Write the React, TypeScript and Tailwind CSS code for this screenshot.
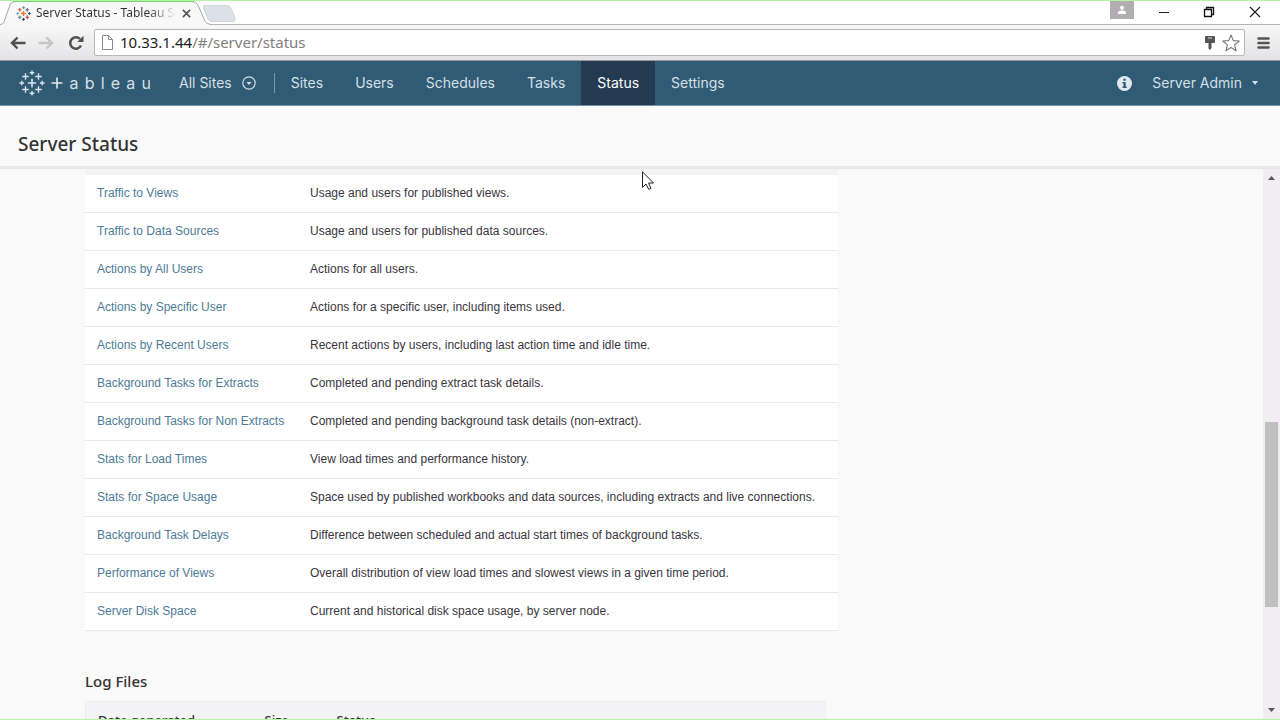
const navItems = ["Sites", "Users", "Schedules", "Tasks", "Status", "Settings"]

const views = [
  { name: "Traffic to Views", description: "Usage and users for published views." },
  { name: "Traffic to Data Sources", description: "Usage and users for published data sources." },
  { name: "Actions by All Users", description: "Actions for all users." },
  { name: "Actions by Specific User", description: "Actions for a specific user, including items used." },
  { name: "Actions by Recent Users", description: "Recent actions by users, including last action time and idle time." },
  { name: "Background Tasks for Extracts", description: "Completed and pending extract task details." },
  { name: "Background Tasks for Non Extracts", description: "Completed and pending background task details (non-extract)." },
  { name: "Stats for Load Times", description: "View load times and performance history." },
  { name: "Stats for Space Usage", description: "Space used by published workbooks and data sources, including extracts and live connections." },
  { name: "Background Task Delays", description: "Difference between scheduled and actual start times of background tasks." },
  { name: "Performance of Views", description: "Overall distribution of view load times and slowest views in a given time period." },
  { name: "Server Disk Space", description: "Current and historical disk space usage, by server node." },
]

function TableauMark({ className, colored = false }: { className?: string; colored?: boolean }) {
  const c = (color: string) => (colored ? color : "#dbe5ee")
  return (
    <svg viewBox="0 0 28 28" className={className} fill="none" strokeWidth={colored ? 2.2 : 1.5} aria-hidden="true">
      <path d="M14 9.5v9M9.5 14h9" stroke={c("#e8762c")} strokeWidth={colored ? 2.6 : 1.8} />
      <path d="M7 3.5v7M3.5 7h7" stroke={c("#c7603a")} />
      <path d="M21 3.5v7M17.5 7h7" stroke={c("#5c6692")} />
      <path d="M7 17.5v7M3.5 21h7" stroke={c("#59879b")} />
      <path d="M21 17.5v7M17.5 21h7" stroke={c("#c7403f")} />
      <path d="M14 .5v5M11.5 3h5" stroke={c("#7099a6")} />
      <path d="M14 22.5v5M11.5 25h5" stroke={c("#1f457e")} />
      <path d="M3 11.5v5M.5 14h5" stroke={c("#7199a6")} />
      <path d="M25 11.5v5M22.5 14h5" stroke={c("#1f457e")} />
    </svg>
  )
}

function TabStrip() {
  return (
    <div className="relative flex h-[25px] items-end border-t border-[#b5f5a5] bg-white font-['Noto_Sans',sans-serif]">
      <div className="relative z-10 h-full w-[208px]">
        <svg className="absolute top-0 left-0 h-6 w-[212px]" viewBox="0 0 212 24" fill="none" aria-hidden="true">
          <path d="M0 23.5C4 23 4 21 5 18L10 4Q11 .5 15 .5H192Q196 .5 198 4L204 18Q206 23.5 212 23.5V24H0Z" fill="#f8f8f8" />
          <path d="M0 23.5C4 23 4 21 5 18L10 4Q11 .5 15 .5H192Q196 .5 198 4L204 18Q206 23.5 212 23.5" stroke="#a5a5a5" />
          <path d="M13 .5H194" stroke="#7bd46c" />
        </svg>
        <div className="relative flex h-full items-center pr-4 pl-4">
          <TableauMark colored className="h-[15px] w-[15px] shrink-0" />
          <span className="ml-[5px] w-[140px] overflow-hidden bg-gradient-to-r from-[#333] from-80% to-transparent bg-clip-text text-xs whitespace-nowrap text-transparent">
            Server Status - Tableau Se
          </span>
          <button aria-label="Close tab" className="ml-[6px] shrink-0">
            <svg className="h-[9px] w-[9px]" viewBox="0 0 10 10" stroke="#555" strokeWidth="1.8" aria-hidden="true">
              <path d="M1 1l8 8M9 1l-8 8" />
            </svg>
          </button>
        </div>
      </div>
      <div className="h-px flex-1 bg-[#b5b5b5]" />
      <button aria-label="New tab" className="absolute top-1 left-[202px] z-10">
        <svg className="h-[17px] w-[34px]" viewBox="0 0 34 17" aria-hidden="true">
          <path d="M3 .5H25Q28 .5 29 3L33 13Q34 16.5 30 16.5H10Q7 16.5 6 14L1.5 3Q1 .5 3 .5Z" fill="#dce0e8" stroke="#d2d5da" />
        </svg>
      </button>
      <div className="absolute top-0 right-0 flex h-[22px] items-center">
        <button aria-label="Profile" className="flex h-[18px] w-6 items-center justify-center self-start bg-[#b0aeb0]">
          <svg className="h-[10px] w-[10px]" viewBox="0 0 10 10" fill="#fff" aria-hidden="true">
            <circle cx="5" cy="2.7" r="2" />
            <path d="M1 9V7.5Q1 5.5 5 5.5T9 7.5V9Z" />
          </svg>
        </button>
        <button aria-label="Minimize" className="ml-6">
          <svg className="h-3 w-3" viewBox="0 0 12 12" stroke="#222" aria-hidden="true">
            <path d="M1 6.5h10" />
          </svg>
        </button>
        <button aria-label="Restore" className="ml-[33px]">
          <svg className="h-3 w-3" viewBox="0 0 12 12" fill="none" stroke="#111" strokeWidth="1.3" aria-hidden="true">
            <path d="M1.5 3.5h7v7h-7zM3.5 3.5v-2h7v7h-2" />
          </svg>
        </button>
        <button aria-label="Close window" className="mr-[19px] ml-[34px]">
          <svg className="h-3 w-3" viewBox="0 0 12 12" stroke="#222" strokeWidth="1.2" aria-hidden="true">
            <path d="M1 1l10 10M11 1L1 11" />
          </svg>
        </button>
      </div>
    </div>
  )
}

function Toolbar() {
  return (
    <div className="flex h-9 items-center border-b border-[#9a9a9e] bg-gradient-to-b from-[#f8f8f8] to-[#e4e2e5] px-[10px]">
      <button aria-label="Back" className="flex">
        <svg className="h-[14px] w-4" viewBox="0 0 16 14" fill="none" stroke="#505050" strokeWidth="2.4" aria-hidden="true">
          <path d="M7.5 1.5L2 7l5.5 5.5M2 7h13.5" />
        </svg>
      </button>
      <button aria-label="Forward" className="ml-3 flex">
        <svg className="h-[14px] w-4" viewBox="0 0 16 14" fill="none" stroke="#c6c6c6" strokeWidth="2.4" aria-hidden="true">
          <path d="M8.5 1.5L14 7l-5.5 5.5M14 7H.5" />
        </svg>
      </button>
      <button aria-label="Reload" className="ml-[14px] flex">
        <svg className="h-4 w-4" viewBox="0 0 16 16" aria-hidden="true">
          <path d="M13 10.5A5.7 5.7 0 1 1 12 4" fill="none" stroke="#505050" strokeWidth="2.5" />
          <path d="M15.5 .8V7H9.3Z" fill="#505050" />
        </svg>
      </button>
      <div className="ml-[10px] flex h-[27px] flex-1 items-center rounded-[2px] border border-[#b8b8b8] bg-white pr-1 pl-[6px]">
        <svg className="h-[15px] w-[13px] shrink-0" viewBox="0 0 13 15" fill="#fff" stroke="#8a8a8a" aria-hidden="true">
          <path d="M1.5 .5h6l4 4v10h-10zM7.5 .5v4h4" />
        </svg>
        <div className="ml-[6px] flex-1 pb-px font-['Noto_Sans',sans-serif] text-[15px] leading-6 text-[#808080]">
          <span className="text-[#1c1c1c]">10.33.1.44</span>/#/server/status
        </div>
        <svg className="h-[14px] w-[10px]" viewBox="0 0 10 14" fill="#555" aria-hidden="true">
          <path d="M1 0h8q1 0 1 1v5q0 1-1 1H6.5v5L5 14l-1.5-1.5V7H1Q0 7 0 6V1Q0 0 1 0Z" />
          <path d="M3 2h4" stroke="#ddd" />
        </svg>
        <button aria-label="Bookmark" className="ml-[7px]">
          <svg className="h-[18px] w-[18px]" viewBox="0 0 18 18" fill="#fff" stroke="#777" strokeWidth="1.1" strokeLinejoin="round" aria-hidden="true">
            <path d="M9 1l2.3 5.6 5.9.4-4.600 3.8 1.500 5.900L9 13.500l-5.100 3.200 1.500-5.900L.8 7l5.900-.4Z" />
          </svg>
        </button>
      </div>
      <button aria-label="Menu" className="ml-3">
        <svg className="h-3 w-[13px]" viewBox="0 0 13 12" stroke="#555" strokeWidth="2.6" strokeLinecap="round" aria-hidden="true">
          <path d="M1.5 1.5h10M1.5 6h10M1.5 10.5h10" />
        </svg>
      </button>
    </div>
  )
}

function NavBar() {
  return (
    <header className="flex h-[45px] items-center border-b border-[#7592a6] bg-[#315a75] font-[Inter,sans-serif] text-sm text-[#d5e0e8]">
      <a href="#" aria-label="tableau" className="ml-[19px] flex w-[132px] items-center justify-between">
        <TableauMark className="h-[26px] w-[26px]" />
        <svg className="h-3 w-3" viewBox="0 0 12 12" stroke="#e3eaf0" strokeWidth="1.6" aria-hidden="true">
          <path d="M6 .5v11M.5 6h11" />
        </svg>
        {["a", "b", "l", "e", "a", "u"].map((letter, i) => (
          <span key={i} className="text-base">
            {letter}
          </span>
        ))}
      </a>
      <button className="ml-7 flex items-center gap-[10px]">
        All Sites
        <svg className="h-[14px] w-[14px]" viewBox="0 0 14 14" fill="none" stroke="#d5e0e8" strokeWidth="1.2" aria-hidden="true">
          <circle cx="7" cy="7" r="6.2" />
          <path d="M4.5 6h5L7 9Z" fill="#d5e0e8" stroke="none" />
        </svg>
      </button>
      <div className="ml-[18px] h-5 w-px bg-[#7d98aa]" />
      <nav className="flex h-full">
        {navItems.map((item) => (
          <a
            key={item}
            href="#"
            className={`flex items-center px-4 ${item === "Status" ? "bg-[#233a50] text-white" : ""}`}
          >
            {item}
          </a>
        ))}
      </nav>
      <div className="mr-[22px] ml-auto flex items-center">
        <button aria-label="Information">
          <svg className="h-[15px] w-[15px]" viewBox="0 0 15 15" aria-hidden="true">
            <circle cx="7.5" cy="7.5" r="7.5" fill="#e0e8f0" />
            <path d="M6.3 2.8h2.4v2H6.3zM5.5 6h3.2v4.5h1V12H5.5v-1.5h1v-3h-1z" fill="#315a75" />
          </svg>
        </button>
        <button className="ml-5 flex items-center gap-[10px]">
          Server Admin
          <svg className="h-1 w-[6px]" viewBox="0 0 6 4" fill="#d5e0e8" aria-hidden="true">
            <path d="M0 0h6L3 4Z" />
          </svg>
        </button>
      </div>
    </header>
  )
}

function Scrollbar() {
  return (
    <div className="flex w-[17px] shrink-0 flex-col items-center bg-[#f0eef1] py-[7px]" aria-hidden="true">
      <svg className="h-1 w-[7px]" viewBox="0 0 7 4" fill="#555">
        <path d="M3.5 0L7 4H0Z" />
      </svg>
      <div className="flex w-[13px] flex-1 flex-col py-1">
        <div className="flex-[238]" />
        <div className="flex-[186] bg-[#c1c0c1]" />
        <div className="flex-[97]" />
      </div>
      <svg className="h-1 w-[7px]" viewBox="0 0 7 4" fill="#555">
        <path d="M0 0h7L3.5 4Z" />
      </svg>
    </div>
  )
}

export default function App() {
  return (
    <div className="relative flex h-screen flex-col overflow-hidden border-b border-[#b5f5a5] bg-[#f9f9f9]">
      <TabStrip />
      <Toolbar />
      <NavBar />
      <div className="border-b-[3px] border-[#e8e7e8] px-[18px] pt-6 pb-2">
        <h1 className="font-['Noto_Sans',sans-serif] text-[19px] leading-7 font-medium text-[#333]">Server Status</h1>
      </div>
      <div className="flex min-h-0 flex-1">
        <main className="min-w-0 flex-1 overflow-hidden pl-[85px] font-['Liberation_Sans',Arial,sans-serif]">
          <div className="w-[753px] border-t-[6px] border-[#f3f3f4] bg-white">
            <table className="w-full border-separate border-spacing-0 text-xs text-[#3a3540]">
              <tbody>
                {views.map((view) => (
                  <tr key={view.name} className="h-[38px]">
                    <td className="w-[213px] border-b border-[#e9e8eb] px-3 pb-[2px]">
                      <a href="#" className="text-[#4d7b98]">
                        {view.name}
                      </a>
                    </td>
                    <td className="border-b border-[#e9e8eb] px-3 pb-[2px]">{view.description}</td>
                  </tr>
                ))}
              </tbody>
            </table>
          </div>
          <h2 className="mt-[38px] font-['Noto_Sans',sans-serif] text-[15px] leading-6 font-medium text-[#333]">Log Files</h2>
          <table className="mt-2 w-[741px] border border-[#ececee] bg-[#f4f4f6] text-left font-['Noto_Sans',sans-serif] text-[13px] text-[#333]">
            <thead>
              <tr className="h-[38px]">
                <th className="w-[167px] px-3 font-medium">Date generated</th>
                <th className="w-[72px] px-3 font-medium">Size</th>
                <th className="px-3 font-medium">Status</th>
              </tr>
            </thead>
          </table>
        </main>
        <Scrollbar />
      </div>
      <svg className="absolute top-[171px] left-[642px] h-[19px] w-3" viewBox="0 0 12 19" fill="#fff" stroke="#222" aria-hidden="true">
        <path d="M.5 .8V16.5L4 13l2.7 5.3 2.3-1L6.6 12H11.5Z" />
      </svg>
    </div>
  )
}
